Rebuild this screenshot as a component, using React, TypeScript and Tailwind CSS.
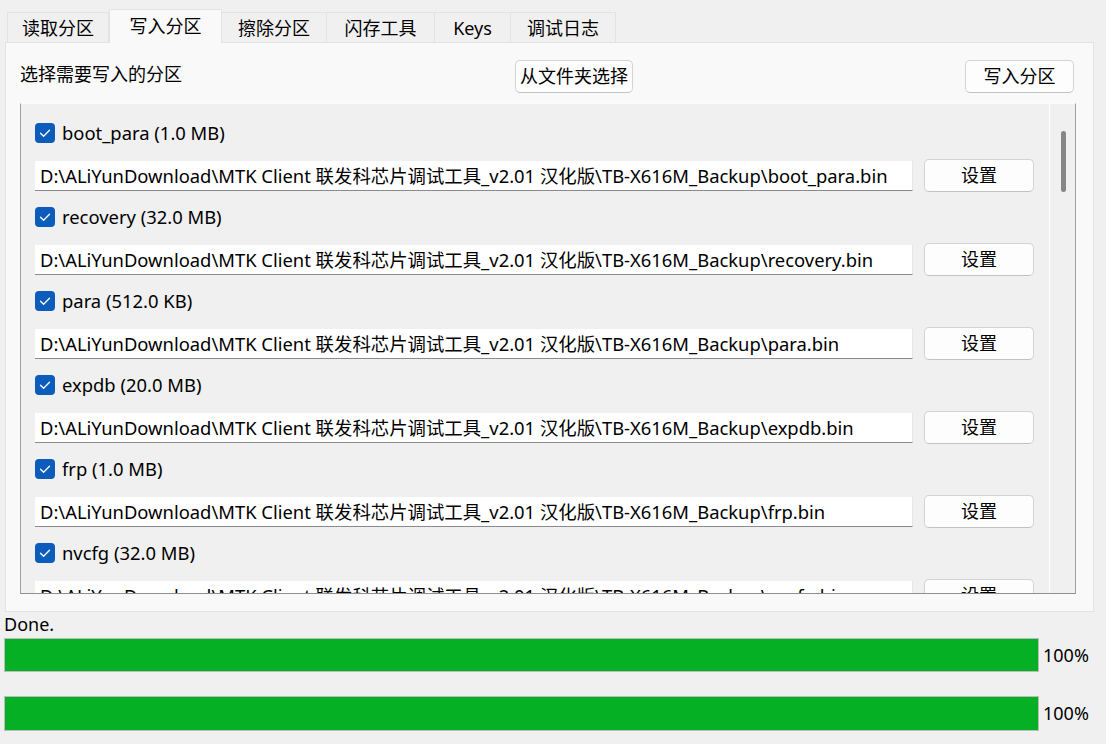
import React from "react";

const FONT = { fontFamily: '"Noto Sans", "Noto Sans CJK SC", sans-serif' };

const BASE = "D:\\ALiYunDownload\\MTK Client 联发科芯片调试工具_v2.01 汉化版\\TB-X616M_Backup\\";

const items = [
  { name: "boot_para", size: "1.0 MB" },
  { name: "recovery", size: "32.0 MB" },
  { name: "para", size: "512.0 KB" },
  { name: "expdb", size: "20.0 MB" },
  { name: "frp", size: "1.0 MB" },
  { name: "nvcfg", size: "32.0 MB" },
  { name: "persist", size: "48.0 MB" },
];

const tabs = [
  { label: "读取分区", w: "w-[102px]" },
  { label: "写入分区", w: "w-[113px]", active: true },
  { label: "擦除分区", w: "w-[105px]" },
  { label: "闪存工具", w: "w-[108px]" },
  { label: "Keys", w: "w-[76px]" },
  { label: "调试日志", w: "w-[105px]" },
];

function Check() {
  return (
    <div className="w-[20px] h-[20px] rounded-[4px] bg-[#0b5cbb] flex items-center justify-center shrink-0">
      <svg width="20" height="20" viewBox="0 0 20 20">
        <polyline points="5.5,10.2 8.6,13.2 14.5,7.2" fill="none" stroke="white" strokeWidth="1.3" strokeLinecap="round" strokeLinejoin="round" />
      </svg>
    </div>
  );
}

function Btn({ children, className }: { children: React.ReactNode; className: string }) {
  return (
    <div className={"flex items-center justify-center bg-[#fdfdfd] border border-[#d3d3d3] border-b-[#c2c2c2] rounded-[5px] text-[18px] text-black " + className}>
      {children}
    </div>
  );
}

export default function App() {
  return (
    <div className="w-[1106px] h-[744px] bg-[#f0f0f0] text-black overflow-hidden" style={FONT}>
      {/* tabs */}
      <div className="flex items-end h-[42px] pl-[7px] pt-[9px]">
        {tabs.map((t) =>
          t.active ? (
            <div
              key={t.label}
              className={"relative z-10 -mb-px h-[34px] bg-[#f9f9f9] border border-b-0 border-[#e3e3e3] flex items-center justify-center text-[18px] pb-[1px] " + t.w}
            >
              {t.label}
            </div>
          ) : (
            <div
              key={t.label}
              className={"h-[30px] bg-[#f0f0f0] border border-b-0 border-l-0 first:border-l border-[#e3e3e3] flex items-center justify-center text-[18px] pt-[1px] " + t.w}
            >
              {t.label}
            </div>
          )
        )}
      </div>

      {/* panel */}
      <div className="ml-[5px] w-[1089px] h-[570px] bg-[#f9f9f9] border border-[#e3e3e3] pl-[14px] pr-[17px] pt-[17px]">
        <div className="flex items-center h-[33px]">
          <div className="w-[495px] text-[18px] -mt-[5px]">选择需要写入的分区</div>
          <Btn className="w-[118px] h-[33px]">从文件夹选择</Btn>
          <Btn className="ml-auto mr-[2px] w-[109px] h-[33px]">写入分区</Btn>
        </div>

        <div className="mt-[10px] h-[491px] border-l border-r border-b border-t border-t-[#fbfbfb] border-l-[#a0a0a0] border-r-[#a0a0a0] border-b-[#8f8f8f] bg-[#f0f0f0] flex">
          <div className="flex-1 overflow-hidden pl-[14px] pt-[14px]">
            {items.map((it) => (
              <div key={it.name} className="h-[84px]">
                <div className="h-[30px] flex items-center gap-[7px]">
                  <Check />
                  <span className="text-[18.4px] whitespace-nowrap">
                    {it.name} ({it.size})
                  </span>
                </div>
                <div className="mt-[10px] h-[34px] flex items-center gap-[11px]">
                  <div className="w-[878px] h-[30px] mt-[2px] bg-white border-b border-[#8a8a8a] border-r border-r-[#e6e6e6] flex items-center pl-[5px] pt-[1px] text-[18.4px] whitespace-nowrap overflow-hidden">
                    {BASE + it.name + ".bin"}
                  </div>
                  <Btn className="w-[110px] h-[33px]">设置</Btn>
                </div>
              </div>
            ))}
          </div>
          <div className="w-[26px] border-l border-white bg-[#f0f0f0] pt-[27px] flex justify-center pl-[1px]">
            <div className="w-[5px] h-[61px] rounded-full bg-[#868686]" />
          </div>
        </div>
      </div>

      {/* status */}
      <div className="h-[26px] pl-[4px] text-[18px] leading-[24px]">Done.</div>
      <div className="flex items-center h-[34px]">
        <div className="ml-[4px] w-[1035px] h-[34px] border border-[#bcbcbc] bg-[#06b025]" />
        <span className="ml-[4px] text-[18px]">100%</span>
      </div>
      <div className="mt-[24px] flex items-center h-[35px]">
        <div className="ml-[4px] w-[1035px] h-[35px] border border-[#bcbcbc] bg-[#06b025]" />
        <span className="ml-[4px] text-[18px]">100%</span>
      </div>
    </div>
  );
}
